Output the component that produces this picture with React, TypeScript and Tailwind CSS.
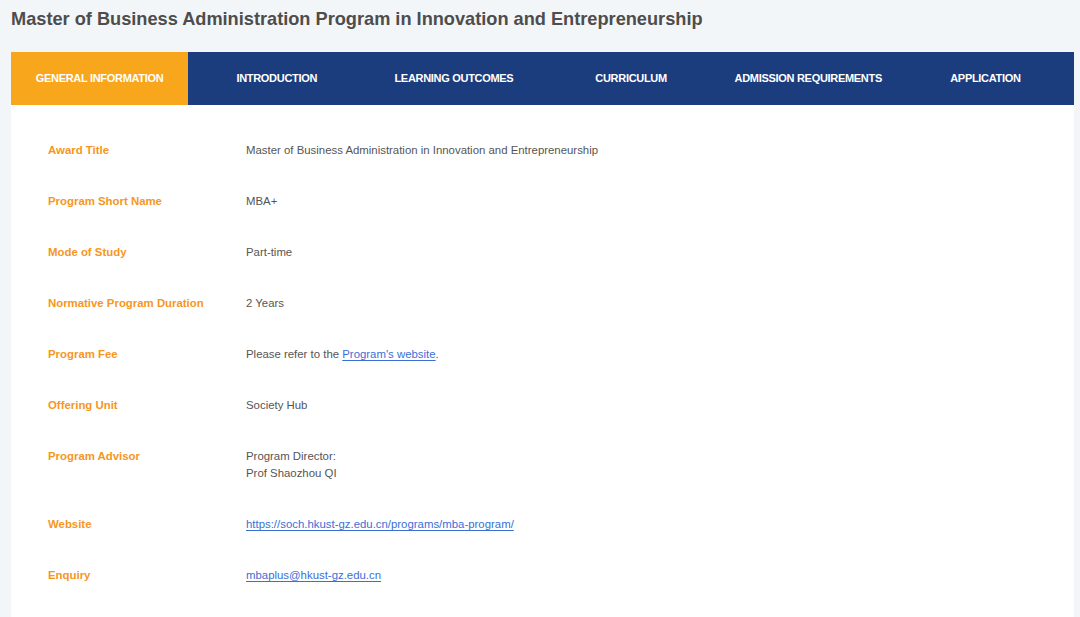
import React from 'react';

const tabs = [
  'General Information',
  'Introduction',
  'Learning Outcomes',
  'Curriculum',
  'Admission Requirements',
  'Application',
];

type Row = { label: string; value: React.ReactNode };

const link = 'text-[#3b6fd6] underline underline-offset-2';

const rows: Row[] = [
  { label: 'Award Title', value: 'Master of Business Administration in Innovation and Entrepreneurship' },
  { label: 'Program Short Name', value: 'MBA+' },
  { label: 'Mode of Study', value: 'Part-time' },
  { label: 'Normative Program Duration', value: '2 Years' },
  {
    label: 'Program Fee',
    value: (
      <>
        Please refer to the <a className={link} href="#">Program's website</a>.
      </>
    ),
  },
  { label: 'Offering Unit', value: 'Society Hub' },
  {
    label: 'Program Advisor',
    value: (
      <>
        Program Director:
        <br />
        Prof Shaozhou QI
      </>
    ),
  },
  {
    label: 'Website',
    value: <a className={link} href="#">https://soch.hkust-gz.edu.cn/programs/mba-program/</a>,
  },
  {
    label: 'Enquiry',
    value: <a className={link} href="#">mbaplus@hkust-gz.edu.cn</a>,
  },
];

export default function App() {
  return (
    <div className="min-h-[617px] bg-[#f3f6f9] pl-[11px] pr-[6px] font-['Liberation_Sans',Arial,sans-serif]">
      <h1 className="pt-[6px] pb-[20px] text-[18.2px] font-bold leading-[26px] text-[#4d4d4d]">
        Master of Business Administration Program in Innovation and Entrepreneurship
      </h1>

      {/* Tabs */}
      <div className="flex h-[53px] bg-[#1b3c7d]">
        {tabs.map((t, i) => (
          <div
            key={t}
            className={`flex flex-1 items-center justify-center text-[11px] font-bold uppercase tracking-[-0.3px] text-white ${
              i === 0 ? 'bg-[#f8a61c]' : ''
            }`}
          >
            {t}
          </div>
        ))}
      </div>

      {/* Details */}
      <div className="bg-white px-[37px] pt-[20px] pb-[20px]">
        {rows.map((r) => (
          <div key={r.label} className="flex py-[17px] text-[11.4px] leading-[17px]">
            <div className="w-[198px] shrink-0 font-bold text-[#f7961d]">{r.label}</div>
            <div className="text-[#555555]">{r.value}</div>
          </div>
        ))}
      </div>
    </div>
  );
}
